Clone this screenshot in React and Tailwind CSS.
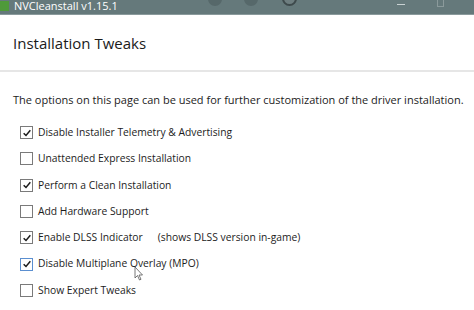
const Check = () => (
  <svg viewBox="0 0 12 12" className="w-[10px] h-[10px]">
    <path d="M2 6.2 L4.8 9 L10 2.8" fill="none" stroke="#1a1a1a" strokeWidth="1.8" />
  </svg>
);

const Option = ({ label, checked, hover, extra }) => (
  <div className="flex items-center h-[26.3px]">
    <div
      className={`w-[13px] h-[13px] border flex items-center justify-center bg-white ${
        hover ? 'border-[#5b8fd0]' : 'border-[#7a7a7a]'
      }`}
    >
      {checked && <Check />}
    </div>
    <span className="ml-[5px] text-[10.3px] text-[#1c1c1c]">{label}</span>
    {extra && <span className="ml-[15px] text-[10.3px] text-[#1c1c1c]">{extra}</span>}
  </div>
);

const App = () => {
  return (
    <div className="w-[474px] h-[310px] bg-white overflow-hidden relative font-['Open_Sans',sans-serif]">
      <div className="h-[15px] bg-[#65797b] flex items-center relative border-b border-[#8a9a9c]">
        <div className="w-[9px] h-[10px] bg-[#4f9a3a] mr-[5px] -mt-[3px]" />
        <span className="text-white text-[11px] leading-[12px] -mt-[3px]">NVCleanstall v1.15.1</span>
        <div className="absolute left-[208px] -top-[8px] w-[14px] h-[14px] rounded-full bg-[#56686a]" />
        <div className="absolute left-[244px] -top-[8px] w-[14px] h-[14px] rounded-full bg-[#56686a]" />
        <div className="absolute left-[282px] -top-[9px] w-[15px] h-[15px] rounded-full bg-[#6e7e80] border-2 border-[#3e4a4c]" />
        <div className="absolute left-[397px] top-[4px] w-[8px] h-[1px] bg-[#c9d2d3]" />
        <div className="absolute left-[437px] -top-[2px] w-[7px] h-[9px] border border-[#8b9a9b]" />
      </div>
      <div className="h-[57px] flex items-center pl-[13px] border-b-2 border-[#e6e6e6]">
        <span className="text-[15px] text-[#1a1a1a] mt-[2px]">Installation Tweaks</span>
      </div>
      <div className="pl-[13px] pt-[20px] text-[11px] text-[#1c1c1c]">
        The options on this page can be used for further customization of the driver installation.
      </div>
      <div className="pl-[20px] pt-[11px]">
        <Option label="Disable Installer Telemetry & Advertising" checked />
        <Option label="Unattended Express Installation" />
        <Option label="Perform a Clean Installation" checked />
        <Option label="Add Hardware Support" />
        <Option label="Enable DLSS Indicator" checked extra="(shows DLSS version in-game)" />
        <Option label="Disable Multiplane Overlay (MPO)" checked hover />
        <Option label="Show Expert Tweaks" />
      </div>
      <svg className="absolute left-[134px] top-[266px]" width="10" height="15" viewBox="0 0 10 15">
        <path d="M1 1 L1 12 L3.5 9.5 L5.5 14 L7 13.3 L5 9 L8.5 9 Z" fill="white" stroke="#555" strokeWidth="0.8" />
      </svg>
    </div>
  );
};

export default App;
